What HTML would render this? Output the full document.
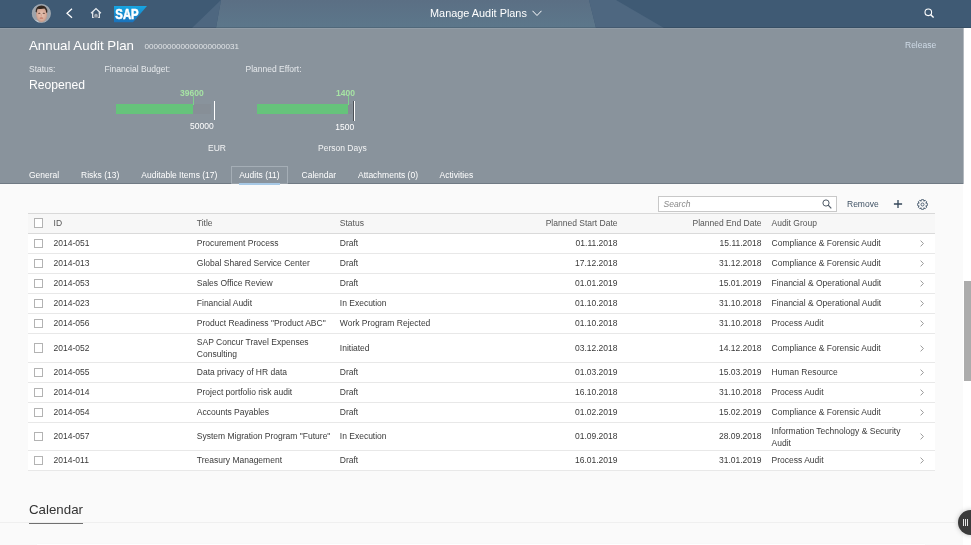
<!DOCTYPE html>
<html><head><meta charset="utf-8">
<style>
*{box-sizing:border-box;margin:0;padding:0}
html,body{width:971px;height:545px;overflow:hidden;background:#fafafa;font-family:"Liberation Sans",sans-serif}
.abs{position:absolute;white-space:nowrap}
#shell{position:absolute;left:0;top:0;width:971px;height:28px;background:#3f5a74;overflow:hidden}
#oph{position:absolute;left:0;top:28px;width:963px;height:156px;background:#89939c;border-bottom:1px solid #707a84}
#track{position:absolute;left:963px;top:28px;width:8px;height:517px;background:#fff}
#thumb{position:absolute;left:963.7px;top:281px;width:8px;height:100px;background:#acacac}
.t{position:absolute;white-space:nowrap;line-height:1}
#table{position:absolute;left:28px;top:213px;width:907px;background:#fff;border-top:1px solid #dcdcdc}
.row{position:absolute;left:28px;width:907px;border-bottom:1px solid #e8e8e8;background:#fff}
.hdr{background:#f7f7f7;border-bottom:1px solid #dadada}
.cb{position:absolute;left:6px;width:9.6px;height:9.5px;border:1px solid #b3b3b3;background:#fff}
.cell{position:absolute;font-size:8.5px;color:#3a3a3a;white-space:nowrap;line-height:11.4px}
.hcell{color:#555}
.r{text-align:right}
.chev{position:absolute;left:892px;width:4px;height:7px}
#wrap{position:absolute;left:0;top:0;width:971px;height:545px;will-change:transform}
</style></head><body><div id="wrap">
<div id="shell">
  <svg width="971" height="28" style="position:absolute;left:0;top:0">
    <defs><linearGradient id="lg" x1="0" y1="0" x2="0" y2="1"><stop offset="0" stop-color="#5b6f84"/><stop offset="1" stop-color="#5c778b"/></linearGradient></defs>
    <polygon points="221,0 589,0 596,28 216,28" fill="url(#lg)"/>
    <polygon points="221,0 216,28 192,28" fill="#4e6780"/>
    <polygon points="589,0 616,0 664,28 596,28" fill="#4e6780"/>
    <rect x="0" y="27" width="971" height="1" fill="#000" opacity="0.12"/>
  </svg>
  <!-- avatar -->
  <svg style="position:absolute;left:31px;top:3px" width="21" height="21" viewBox="0 0 21 21">
    <defs><clipPath id="av"><circle cx="10.35" cy="10.45" r="9.3"/></clipPath>
    <radialGradient id="face" cx="0.5" cy="0.5" r="0.6"><stop offset="0" stop-color="#e6c4b4"/><stop offset="0.6" stop-color="#d8ab98"/><stop offset="1" stop-color="#a88a80"/></radialGradient></defs>
    <g clip-path="url(#av)">
      <rect x="0" y="0" width="21" height="21" fill="#9ca3ab"/>
      <ellipse cx="10.6" cy="11.6" rx="5.6" ry="7.6" fill="url(#face)"/>
      <path d="M4.6,9 Q4.5,3 10.5,2.6 Q16.6,3 16.3,9.5 L15.2,9.8 Q15,6.5 13.5,5.6 Q10.5,6.4 6.6,5.8 Q5.8,7 5.7,9.5 Z" fill="#34271f"/>
      <ellipse cx="8.3" cy="10.3" rx="1.2" ry="0.55" fill="#5a3e34"/>
      <ellipse cx="12.8" cy="10.3" rx="1.2" ry="0.55" fill="#5a3e34"/>
      <rect x="9.6" y="11" width="1.3" height="2.5" fill="#c9907c" opacity="0.6"/>
      <ellipse cx="10.4" cy="15" rx="1.9" ry="0.6" fill="#b8604f"/>
      <path d="M1.5,18.5 Q5,15.8 8.5,19.5 L8.5,21 L1.5,21 Z" fill="#f2f4f6"/>
      <path d="M13,19.5 Q16,16.5 19.5,18.5 L19.5,21 L13,21 Z" fill="#d9dde2"/>
    </g>
    <circle cx="10.35" cy="10.45" r="9.1" fill="none" stroke="#aab1b8" stroke-width="0.7" opacity="0.9"/>
  </svg>
  <svg style="position:absolute;left:65px;top:7px" width="9" height="13" viewBox="0 0 9 13"><polyline points="7,1.8 2,6.3 7,10.8" fill="none" stroke="#fff" stroke-width="1.25"/></svg>
  <svg style="position:absolute;left:90px;top:7px" width="12" height="12" viewBox="0 0 12 12"><path d="M1.1,6.3 L6,1.6 L10.9,6.3" fill="none" stroke="#e6eaee" stroke-width="1.35"/><path d="M2.7,5.3 V10.4 H9.3 V5.3" fill="none" stroke="#e6eaee" stroke-width="1.3"/><path d="M3.9,10.4 V8.3 A2.1,2.1 0 0 1 8.1,8.3 V10.4 Z" fill="#a3adb8" stroke="#2b3d50" stroke-width="0.6"/></svg>
  <svg style="position:absolute;left:113.5px;top:5.8px" width="33" height="17" viewBox="0 0 33 17">
    <defs><linearGradient id="sapg" x1="0" y1="0" x2="0" y2="1"><stop offset="0" stop-color="#17a6e2"/><stop offset="1" stop-color="#1a72bb"/></linearGradient></defs>
    <polygon points="0,0 33,0 19,16.2 0,16.2" fill="url(#sapg)"/>
    <text x="1.3" y="13.1" font-family="Liberation Sans" font-weight="bold" font-size="13.8" fill="#fff" stroke="#fff" stroke-width="0.55" textLength="23.4" lengthAdjust="spacingAndGlyphs">SAP</text>
  </svg>
  <div class="t" style="left:430px;top:7.8px;font-size:10.9px;color:#fff">Manage Audit Plans</div>
  <svg style="position:absolute;left:532px;top:10px" width="10" height="7" viewBox="0 0 10 7"><polyline points="0.5,0.8 5,5.5 9.5,0.8" fill="none" stroke="#fff" stroke-width="1"/></svg>
  <svg style="position:absolute;left:924px;top:8px" width="11" height="11" viewBox="0 0 11 11"><circle cx="4.3" cy="4.3" r="3.3" fill="none" stroke="#fff" stroke-width="1.1"/><line x1="6.7" y1="6.7" x2="9.6" y2="9.6" stroke="#fff" stroke-width="1.4"/></svg>
</div>

<div id="oph">
  <div style="position:absolute;left:0;top:0;width:963px;height:1px;background:#929da7"></div>
  <div class="t" style="left:29px;top:11px;font-size:13.3px;color:#fff">Annual Audit Plan</div>
  <div class="t" style="left:144.5px;top:15.2px;font-size:8.1px;color:#e1e4e7">000000000000000000031</div>
  <div class="t" style="left:905px;top:12.8px;font-size:8.5px;color:#cfdbe7">Release</div>
  <div class="t" style="left:29px;top:37px;font-size:8.5px;color:#e6e9ec">Status:</div>
  <div class="t" style="left:29px;top:50.5px;font-size:12.15px;color:#fff">Reopened</div>
  <div class="t" style="left:104.5px;top:37px;font-size:8.5px;color:#e6e9ec">Financial Budget:</div>
  <div class="t" style="left:245.5px;top:37px;font-size:8.5px;color:#e6e9ec">Planned Effort:</div>
  <!-- budget bar -->
  <div style="position:absolute;left:116px;top:76px;width:77px;height:10.3px;background:#66c37b"></div>
  <div style="position:absolute;left:193px;top:76px;width:18px;height:10.3px;background:#878f97"></div>
  <div style="position:absolute;left:192.5px;top:68px;width:1px;height:9px;background:#7fcf8e"></div>
  <div style="position:absolute;left:213.6px;top:73px;width:1.2px;height:19px;background:#fff"></div>
  <div class="t" style="left:180px;top:61px;font-size:8.5px;font-weight:bold;color:#a6e3a4">39600</div>
  <div class="t" style="left:190px;top:94px;font-size:8.5px;color:#fff">50000</div>
  <div class="t" style="left:208px;top:115.5px;font-size:8.5px;color:#f3f4f5">EUR</div>
  <!-- effort bar -->
  <div style="position:absolute;left:257px;top:76px;width:91px;height:10.3px;background:#66c37b"></div>
  <div style="position:absolute;left:348px;top:76px;width:4px;height:10.3px;background:#858d95"></div>
  <div style="position:absolute;left:347.5px;top:68px;width:1px;height:9px;background:#7fcf8e"></div>
  <div style="position:absolute;left:353.2px;top:73px;width:1px;height:19.5px;background:#4a4f55"></div>
  <div style="position:absolute;left:354.3px;top:73px;width:1.2px;height:19.5px;background:#fff"></div>
  <div class="t" style="left:336px;top:61px;font-size:8.5px;font-weight:bold;color:#a6e3a4">1400</div>
  <div class="t" style="left:335.3px;top:94.5px;font-size:8.5px;color:#fff">1500</div>
  <div class="t" style="left:318px;top:115.5px;font-size:8.5px;color:#f3f4f5">Person Days</div>
  <!-- tabs -->
  <div class="t" style="left:29px;top:143px;font-size:8.5px;color:#fff">General</div>
  <div class="t" style="left:81px;top:143px;font-size:8.5px;color:#fff">Risks (13)</div>
  <div class="t" style="left:141.3px;top:143px;font-size:8.5px;color:#fff">Auditable Items (17)</div>
  <div style="position:absolute;left:230.5px;top:138px;width:57px;height:18px;border:1px solid rgba(205,213,220,0.42)"></div>
  <div class="t" style="left:239.2px;top:143px;font-size:8.5px;color:#fff">Audits (11)</div>
  <div style="position:absolute;left:239px;top:155px;width:41px;height:1.5px;background:#a7c9e6"></div>
  <div class="t" style="left:301.6px;top:143px;font-size:8.5px;color:#fff">Calendar</div>
  <div class="t" style="left:358px;top:143px;font-size:8.5px;color:#fff">Attachments (0)</div>
  <div class="t" style="left:439.6px;top:143px;font-size:8.5px;color:#fff">Activities</div>
</div>
<div id="track"></div>
<div style="position:absolute;left:963px;top:28px;width:1px;height:156px;background:#b3b9bf"></div>
<div id="thumb"></div>

<!-- toolbar -->
<div style="position:absolute;left:658px;top:196px;width:179px;height:16px;border:1px solid #c8c8c8;background:#fff"></div>
<div class="t" style="left:663.5px;top:200px;font-size:8.5px;font-style:italic;color:#8a8a8a">Search</div>
<svg style="position:absolute;left:822px;top:199px" width="10" height="10" viewBox="0 0 10 10"><circle cx="4" cy="4" r="3.1" fill="none" stroke="#4f5a66" stroke-width="1"/><line x1="6.2" y1="6.2" x2="9.3" y2="9.3" stroke="#4f5a66" stroke-width="1.2"/></svg>
<div class="t" style="left:847px;top:200px;font-size:8.5px;color:#3e5063">Remove</div>
<svg style="position:absolute;left:893px;top:199px" width="10" height="10" viewBox="0 0 10 10"><path d="M5,0.9 V9.1 M0.9,5 H9.1" stroke="#34475a" stroke-width="1.3"/></svg>
<svg style="position:absolute;left:916.7px;top:198.5px" width="11" height="11" viewBox="0 0 11 11"><circle cx="5.5" cy="5.5" r="1.5" fill="none" stroke="#506275" stroke-width="1"/><polygon points="4.41,0.62 6.59,0.62 7.32,2.17 6.57,1.85 8.18,1.28 9.72,2.82 9.15,4.43 8.83,3.68 10.38,4.41 10.38,6.59 8.83,7.32 9.15,6.57 9.72,8.18 8.18,9.72 6.57,9.15 7.32,8.83 6.59,10.38 4.41,10.38 3.68,8.83 4.43,9.15 2.82,9.72 1.28,8.18 1.85,6.57 2.17,7.32 0.62,6.59 0.62,4.41 2.17,3.68 1.85,4.43 1.28,2.82 2.82,1.28 4.43,1.85 3.68,2.17" fill="none" stroke="#506275" stroke-width="0.9" stroke-linejoin="round"/></svg>

<div id="table"></div>
<div id="rows">
<div class="row hdr" style="top:213px;height:21px;border-top:1px solid #d9d9d9"></div>
<div class="cb" style="left:33.8px;top:218.4px"></div><div class="cell hcell" style="left:53.6px;top:218.3px;">ID</div><div class="cell hcell" style="left:196.8px;top:218.3px;">Title</div><div class="cell hcell" style="left:339.8px;top:218.3px;">Status</div><div class="cell hcell" style="left:517.5px;top:218.3px;width:100px;text-align:right">Planned Start Date</div><div class="cell hcell" style="left:661.5px;top:218.3px;width:100px;text-align:right">Planned End Date</div><div class="cell hcell" style="left:771.6px;top:218.3px;">Audit Group</div>
<div class="row" style="top:234px;height:20px"></div>
<div class="cb" style="left:33.8px;top:238.9px"></div><div class="cell" style="left:53.6px;top:238.2px;">2014-051</div><div class="cell" style="left:196.8px;top:238.2px;">Procurement Process</div><div class="cell" style="left:339.8px;top:238.2px;">Draft</div><div class="cell" style="left:517.5px;top:238.2px;width:100px;text-align:right">01.11.2018</div><div class="cell" style="left:661.5px;top:238.2px;width:100px;text-align:right">15.11.2018</div><div class="cell" style="left:771.6px;top:238.2px;">Compliance &amp; Forensic Audit</div>
<svg class="chev" style="left:919.5px;top:240.0px" viewBox="0 0 4 7"><polyline points="0.6,0.6 3.4,3.5 0.6,6.4" fill="none" stroke="#8f8f8f" stroke-width="0.9"/></svg>
<div class="row" style="top:254px;height:20px"></div>
<div class="cb" style="left:33.8px;top:258.9px"></div><div class="cell" style="left:53.6px;top:258.2px;">2014-013</div><div class="cell" style="left:196.8px;top:258.2px;">Global Shared Service Center</div><div class="cell" style="left:339.8px;top:258.2px;">Draft</div><div class="cell" style="left:517.5px;top:258.2px;width:100px;text-align:right">17.12.2018</div><div class="cell" style="left:661.5px;top:258.2px;width:100px;text-align:right">31.12.2018</div><div class="cell" style="left:771.6px;top:258.2px;">Compliance &amp; Forensic Audit</div>
<svg class="chev" style="left:919.5px;top:260.0px" viewBox="0 0 4 7"><polyline points="0.6,0.6 3.4,3.5 0.6,6.4" fill="none" stroke="#8f8f8f" stroke-width="0.9"/></svg>
<div class="row" style="top:274px;height:20px"></div>
<div class="cb" style="left:33.8px;top:278.9px"></div><div class="cell" style="left:53.6px;top:278.2px;">2014-053</div><div class="cell" style="left:196.8px;top:278.2px;">Sales Office Review</div><div class="cell" style="left:339.8px;top:278.2px;">Draft</div><div class="cell" style="left:517.5px;top:278.2px;width:100px;text-align:right">01.01.2019</div><div class="cell" style="left:661.5px;top:278.2px;width:100px;text-align:right">15.01.2019</div><div class="cell" style="left:771.6px;top:278.2px;">Financial &amp; Operational Audit</div>
<svg class="chev" style="left:919.5px;top:280.0px" viewBox="0 0 4 7"><polyline points="0.6,0.6 3.4,3.5 0.6,6.4" fill="none" stroke="#8f8f8f" stroke-width="0.9"/></svg>
<div class="row" style="top:294px;height:20px"></div>
<div class="cb" style="left:33.8px;top:298.9px"></div><div class="cell" style="left:53.6px;top:298.2px;">2014-023</div><div class="cell" style="left:196.8px;top:298.2px;">Financial Audit</div><div class="cell" style="left:339.8px;top:298.2px;">In Execution</div><div class="cell" style="left:517.5px;top:298.2px;width:100px;text-align:right">01.10.2018</div><div class="cell" style="left:661.5px;top:298.2px;width:100px;text-align:right">31.10.2018</div><div class="cell" style="left:771.6px;top:298.2px;">Financial &amp; Operational Audit</div>
<svg class="chev" style="left:919.5px;top:300.0px" viewBox="0 0 4 7"><polyline points="0.6,0.6 3.4,3.5 0.6,6.4" fill="none" stroke="#8f8f8f" stroke-width="0.9"/></svg>
<div class="row" style="top:314px;height:20px"></div>
<div class="cb" style="left:33.8px;top:318.9px"></div><div class="cell" style="left:53.6px;top:318.2px;">2014-056</div><div class="cell" style="left:196.8px;top:318.2px;">Product Readiness "Product ABC"</div><div class="cell" style="left:339.8px;top:318.2px;">Work Program Rejected</div><div class="cell" style="left:517.5px;top:318.2px;width:100px;text-align:right">01.10.2018</div><div class="cell" style="left:661.5px;top:318.2px;width:100px;text-align:right">31.10.2018</div><div class="cell" style="left:771.6px;top:318.2px;">Process Audit</div>
<svg class="chev" style="left:919.5px;top:320.0px" viewBox="0 0 4 7"><polyline points="0.6,0.6 3.4,3.5 0.6,6.4" fill="none" stroke="#8f8f8f" stroke-width="0.9"/></svg>
<div class="row" style="top:334px;height:29px"></div>
<div class="cb" style="left:33.8px;top:343.4px"></div><div class="cell" style="left:53.6px;top:342.7px;">2014-052</div><div class="cell" style="left:196.8px;top:336.3px;line-height:12px;">SAP Concur Travel Expenses<br>Consulting</div><div class="cell" style="left:339.8px;top:342.7px;">Initiated</div><div class="cell" style="left:517.5px;top:342.7px;width:100px;text-align:right">03.12.2018</div><div class="cell" style="left:661.5px;top:342.7px;width:100px;text-align:right">14.12.2018</div><div class="cell" style="left:771.6px;top:342.7px;">Compliance &amp; Forensic Audit</div>
<svg class="chev" style="left:919.5px;top:344.5px" viewBox="0 0 4 7"><polyline points="0.6,0.6 3.4,3.5 0.6,6.4" fill="none" stroke="#8f8f8f" stroke-width="0.9"/></svg>
<div class="row" style="top:363px;height:20px"></div>
<div class="cb" style="left:33.8px;top:367.9px"></div><div class="cell" style="left:53.6px;top:367.2px;">2014-055</div><div class="cell" style="left:196.8px;top:367.2px;">Data privacy of HR data</div><div class="cell" style="left:339.8px;top:367.2px;">Draft</div><div class="cell" style="left:517.5px;top:367.2px;width:100px;text-align:right">01.03.2019</div><div class="cell" style="left:661.5px;top:367.2px;width:100px;text-align:right">15.03.2019</div><div class="cell" style="left:771.6px;top:367.2px;">Human Resource</div>
<svg class="chev" style="left:919.5px;top:369.0px" viewBox="0 0 4 7"><polyline points="0.6,0.6 3.4,3.5 0.6,6.4" fill="none" stroke="#8f8f8f" stroke-width="0.9"/></svg>
<div class="row" style="top:383px;height:20px"></div>
<div class="cb" style="left:33.8px;top:387.9px"></div><div class="cell" style="left:53.6px;top:387.2px;">2014-014</div><div class="cell" style="left:196.8px;top:387.2px;">Project portfolio risk audit</div><div class="cell" style="left:339.8px;top:387.2px;">Draft</div><div class="cell" style="left:517.5px;top:387.2px;width:100px;text-align:right">16.10.2018</div><div class="cell" style="left:661.5px;top:387.2px;width:100px;text-align:right">31.10.2018</div><div class="cell" style="left:771.6px;top:387.2px;">Process Audit</div>
<svg class="chev" style="left:919.5px;top:389.0px" viewBox="0 0 4 7"><polyline points="0.6,0.6 3.4,3.5 0.6,6.4" fill="none" stroke="#8f8f8f" stroke-width="0.9"/></svg>
<div class="row" style="top:403px;height:20px"></div>
<div class="cb" style="left:33.8px;top:407.9px"></div><div class="cell" style="left:53.6px;top:407.2px;">2014-054</div><div class="cell" style="left:196.8px;top:407.2px;">Accounts Payables</div><div class="cell" style="left:339.8px;top:407.2px;">Draft</div><div class="cell" style="left:517.5px;top:407.2px;width:100px;text-align:right">01.02.2019</div><div class="cell" style="left:661.5px;top:407.2px;width:100px;text-align:right">15.02.2019</div><div class="cell" style="left:771.6px;top:407.2px;">Compliance &amp; Forensic Audit</div>
<svg class="chev" style="left:919.5px;top:409.0px" viewBox="0 0 4 7"><polyline points="0.6,0.6 3.4,3.5 0.6,6.4" fill="none" stroke="#8f8f8f" stroke-width="0.9"/></svg>
<div class="row" style="top:423px;height:28px"></div>
<div class="cb" style="left:33.8px;top:431.9px"></div><div class="cell" style="left:53.6px;top:431.2px;">2014-057</div><div class="cell" style="left:196.8px;top:431.2px;">System Migration Program "Future"</div><div class="cell" style="left:339.8px;top:431.2px;">In Execution</div><div class="cell" style="left:517.5px;top:431.2px;width:100px;text-align:right">01.09.2018</div><div class="cell" style="left:661.5px;top:431.2px;width:100px;text-align:right">28.09.2018</div><div class="cell" style="left:771.6px;top:424.8px;line-height:12px;">Information Technology &amp; Security<br>Audit</div>
<svg class="chev" style="left:919.5px;top:433.0px" viewBox="0 0 4 7"><polyline points="0.6,0.6 3.4,3.5 0.6,6.4" fill="none" stroke="#8f8f8f" stroke-width="0.9"/></svg>
<div class="row" style="top:451px;height:20px"></div>
<div class="cb" style="left:33.8px;top:455.9px"></div><div class="cell" style="left:53.6px;top:455.2px;">2014-011</div><div class="cell" style="left:196.8px;top:455.2px;">Treasury Management</div><div class="cell" style="left:339.8px;top:455.2px;">Draft</div><div class="cell" style="left:517.5px;top:455.2px;width:100px;text-align:right">16.01.2019</div><div class="cell" style="left:661.5px;top:455.2px;width:100px;text-align:right">31.01.2019</div><div class="cell" style="left:771.6px;top:455.2px;">Process Audit</div>
<svg class="chev" style="left:919.5px;top:457.0px" viewBox="0 0 4 7"><polyline points="0.6,0.6 3.4,3.5 0.6,6.4" fill="none" stroke="#8f8f8f" stroke-width="0.9"/></svg>
</div>

<!-- calendar section -->
<div class="t" style="left:29px;top:503px;font-size:13.3px;color:#333">Calendar</div>
<div style="position:absolute;left:0;top:522px;width:955px;height:1px;background:#efefef"></div>
<div style="position:absolute;left:29px;top:522.6px;width:54px;height:1.5px;background:#707070"></div>

<div style="position:absolute;left:37px;top:543.5px;width:888px;height:2px;background:#fff;box-shadow:0 0 1px rgba(0,0,0,0.08)"></div>
<!-- floating circle -->
<div style="position:absolute;left:958px;top:509.8px;width:25.6px;height:25.6px;border-radius:50%;background:#3b3b3b;box-shadow:0 0 5px rgba(0,0,0,0.25)"></div>
<div style="position:absolute;left:963px;top:519px;width:1px;height:7px;background:#e6e6e6"></div>
<div style="position:absolute;left:965px;top:519px;width:1px;height:7px;background:#e6e6e6"></div>
<div style="position:absolute;left:967px;top:519px;width:1px;height:7px;background:#e6e6e6"></div>
</div></body></html>
